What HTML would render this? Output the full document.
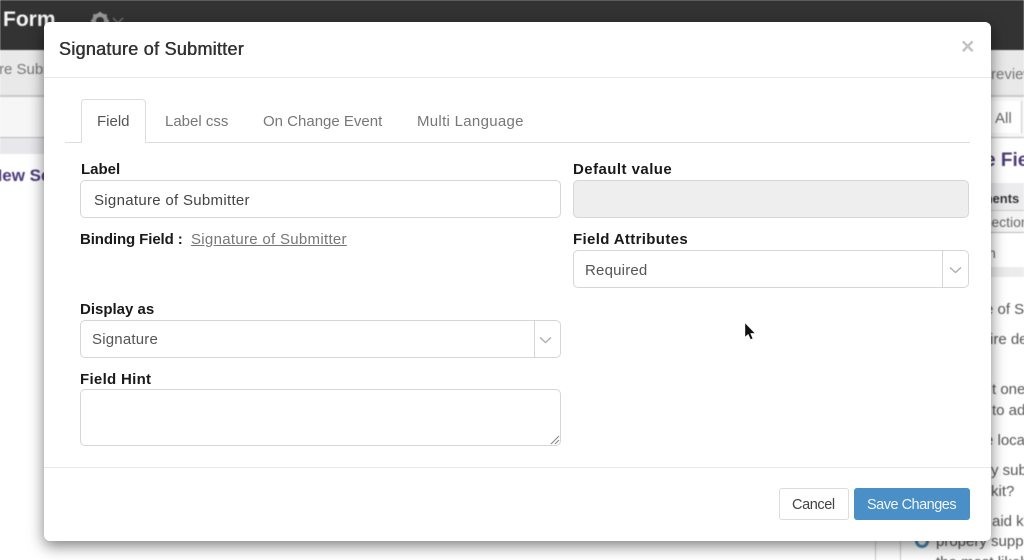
<!DOCTYPE html>
<html><head><meta charset="utf-8">
<style>
html,body{margin:0;padding:0;width:1024px;height:560px;overflow:hidden;background:#fff}
body{position:relative;font-family:"Liberation Sans",sans-serif;color:#444}
.a{position:absolute}
.t{position:absolute;white-space:nowrap;line-height:20px}
.b{font-weight:bold;color:#1a1a1a;font-size:15px}
.box{position:absolute;box-sizing:border-box;border:1.5px solid #d6d6d6;border-radius:5px;background:#fff}
.chev{position:absolute;top:0;right:0;bottom:0;width:25px;border-left:1.5px solid #d6d6d6}
.bg{filter:blur(.5px)}
.r{font-size:15px;color:#555}
</style></head><body>
<div class="bg">
<div class="a" style="left:0;top:0;width:1024px;height:50px;background:#333"></div>
<div class="t" style="left:3px;top:8px;font-size:21px;line-height:24px;font-weight:bold;color:#f6f6f6">Form</div>
<svg class="a" style="left:90px;top:11px" width="36" height="14"><circle cx="10" cy="10" r="6" fill="none" stroke="#9a9a9a" stroke-width="4"/><path d="M10 1V4M3.6 3.6L6 6M16.4 3.6L14 6M1 10H4M16 10H19" stroke="#9a9a9a" stroke-width="2.6"/><path d="M23 7L28 12L33 7" fill="none" stroke="#7a7a7a" stroke-width="1.4"/></svg>
<div class="a" style="left:0;top:50px;width:1024px;height:45px;background:#e9e9e9"></div>
<div class="a" style="left:0;top:95px;width:1024px;height:2px;background:#c9c9c9"></div>
<div class="t" style="left:-1px;top:60px;font-size:15px;color:#777">re Submission</div>
<div class="t" style="left:991px;top:65px;font-size:15px;color:#777">review</div>
<div class="a" style="left:0;top:97px;width:1024px;height:40px;background:#f6f6f6"></div>
<div class="a" style="left:0;top:137px;width:1024px;height:1px;background:#bbb"></div>
<div class="a" style="left:0;top:138px;width:1024px;height:16px;background:#e8e8ec"></div>
<div class="a" style="left:985px;top:101px;height:32px;background:#fff;border-right:1px solid #ccc;box-sizing:border-box;width:37px"></div>
<div class="t" style="left:995px;top:109px;font-size:15px;color:#666">All</div>
<div class="a" style="left:985px;top:138px;width:39px;height:45px;background:#fff"></div>
<div class="t" style="left:-10px;top:166px;font-size:17px;font-weight:bold;color:#4b3a78">New Section</div>
<div class="t" style="left:985px;top:151px;font-size:19px;font-weight:bold;color:#4b3a78">e Fields</div>
<div class="a" style="left:985px;top:183px;width:39px;height:27px;background:#ececee"></div>
<div class="t" style="left:981px;top:189px;font-size:13px;font-weight:bold;color:#333">ments</div>
<div class="a" style="left:985px;top:210px;width:39px;height:23px;background:#f4f4f4;border-bottom:1px solid #bbb;border-top:1px solid #ccc;box-sizing:border-box"></div>
<div class="t" style="left:982px;top:212px;font-size:14px;color:#666">Section</div>
<div class="t" style="left:988px;top:243px;font-size:14px;color:#666">n</div>
<div class="a" style="left:985px;top:267px;width:39px;height:10px;background:#ececee"></div>
<div class="a" style="left:875px;top:535px;width:1px;height:25px;background:#ccc"></div>
<div class="a" style="left:900px;top:535px;width:1px;height:25px;background:#ccc"></div>
<div class="t r" style="left:985px;top:300px">e of S</div>
<div class="t r" style="left:990px;top:330px">ire de</div>
<div class="t r" style="left:992px;top:380px">t one</div>
<div class="t r" style="left:992px;top:401px">to ad</div>
<div class="t r" style="left:985px;top:431px">e loca</div>
<div class="t r" style="left:991px;top:461px">y subs</div>
<div class="t r" style="left:991px;top:482px">kit?</div>
<div class="t r" style="left:992px;top:512px">aid ki</div>
<div class="t r" style="left:936px;top:532px">propery supp</div>
<div class="t r" style="left:936px;top:553px">the most likely</div>
<div class="a" style="left:915px;top:534px;width:14px;height:14px;border-radius:50%;border:3px solid #4a8bb8;box-sizing:border-box"></div>
</div>

<div class="a" style="left:44px;top:22px;width:947px;height:519px;background:#fff;border-radius:6px;box-shadow:0 5px 15px rgba(0,0,0,.5)"></div>
<div style="filter:blur(.35px)">
<div class="t" style="left:59px;top:39px;font-size:18px;color:#333;letter-spacing:.27px;text-shadow:.3px 0 0 #333,-.2px 0 0 #333">Signature of Submitter</div>
<div class="t" style="left:961px;top:36px;font-size:23px;font-weight:bold;color:#c4c4c4">×</div>
<div class="a" style="left:44px;top:77px;width:947px;height:1px;background:#e8e8e8"></div>

<div class="a" style="left:65px;top:142px;width:905px;height:1px;background:#ddd"></div>
<div class="a" style="left:81px;top:99px;width:65px;height:44px;box-sizing:border-box;background:#fff;border:1px solid #ddd;border-bottom:none;border-radius:4px 4px 0 0"></div>
<div class="t" style="left:97px;top:112px;font-size:15px;color:#555">Field</div>
<div class="t" style="left:165px;top:112px;font-size:15px;color:#777">Label css</div>
<div class="t" style="left:263px;top:112px;font-size:15px;color:#777">On Change Event</div>
<div class="t" style="left:417px;top:112px;font-size:15px;color:#777;letter-spacing:.3px">Multi Language</div>

<div class="t b" style="left:81px;top:160px">Label</div>
<div class="box" style="left:80px;top:180px;width:480.5px;height:38px"></div>
<div class="t" style="left:94px;top:191px;font-size:15px;color:#444;letter-spacing:.3px">Signature of Submitter</div>

<div class="t b" style="left:573px;top:160px;letter-spacing:.45px">Default value</div>
<div class="box" style="left:573px;top:180px;width:395.5px;height:38px;background:#eee"></div>

<div class="t b" style="left:80px;top:230px;letter-spacing:-.1px">Binding Field :</div>
<div class="t" style="left:191px;top:230px;font-size:15px;color:#777;text-decoration:underline;letter-spacing:.3px">Signature of Submitter</div>

<div class="t b" style="left:573px;top:230px;letter-spacing:.35px">Field Attributes</div>
<div class="box" style="left:573px;top:250px;width:395.5px;height:38px"><div class="chev"><svg width="25" height="35" style="display:block"><path d="M7 16.5l5.5 5 5.5-5" fill="none" stroke="#aaa" stroke-width="1.3"/></svg></div></div>
<div class="t" style="left:585px;top:261px;font-size:15px;color:#555;letter-spacing:.2px">Required</div>

<div class="t b" style="left:80px;top:300px">Display as</div>
<div class="box" style="left:80px;top:320px;width:480.5px;height:38px"><div class="chev"><svg width="25" height="35" style="display:block"><path d="M5 16.5l5.5 5 5.5-5" fill="none" stroke="#aaa" stroke-width="1.3"/></svg></div></div>
<div class="t" style="left:92px;top:330px;font-size:15px;color:#555;letter-spacing:.2px">Signature</div>

<div class="t b" style="left:80px;top:370px;letter-spacing:.3px">Field Hint</div>
<div class="box" style="left:80px;top:389px;width:480.5px;height:57px"></div>
<svg class="a" style="left:550px;top:435px" width="10" height="10"><path d="M1 9L9 1M5 9L9 5" stroke="#888" stroke-width="1.1" fill="none"/></svg>

<div class="a" style="left:44px;top:467px;width:947px;height:1px;background:#e8e8e8"></div>

<div class="a" style="left:779px;top:488px;width:70px;height:32px;box-sizing:border-box;background:#fff;border:1px solid #ddd;border-radius:3px"></div>
<div class="t" style="left:792px;top:495px;font-size:14.5px;color:#444;letter-spacing:-.4px">Cancel</div>
<div class="a" style="left:854px;top:488px;width:116px;height:32px;background:#4a8fc5;border-radius:3px"></div>
<div class="t" style="left:867px;top:495px;font-size:14.5px;color:#f2f6fa;letter-spacing:-.5px">Save Changes</div>
</div>

<svg class="a" style="left:743px;top:322px" width="14" height="20"><path d="M2 1V15L5.2 12.2L7.6 17.5L9.8 16.5L7.5 11.4H12Z" fill="#111" stroke="#fff" stroke-width=".4"/></svg>
</body></html>
